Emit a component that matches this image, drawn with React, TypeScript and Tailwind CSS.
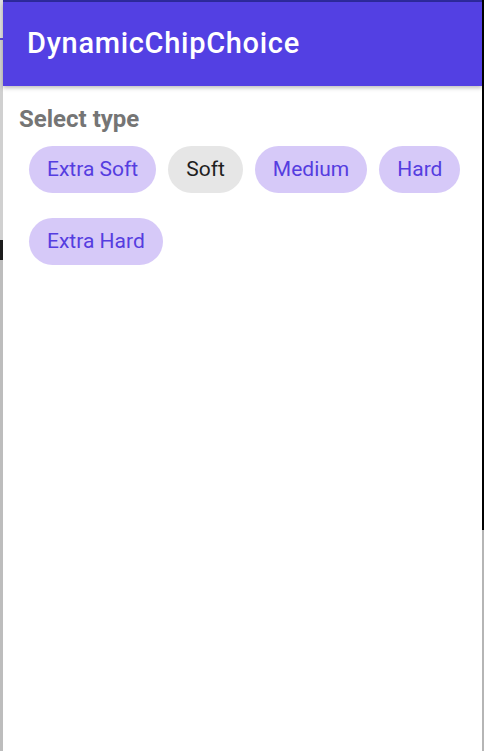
const chips = [
  { label: 'Extra Soft', selected: true },
  { label: 'Soft', selected: false },
  { label: 'Medium', selected: true },
  { label: 'Hard', selected: true },
  { label: 'Extra Hard', selected: true },
]

function Chip({ label, selected }: { label: string; selected: boolean }) {
  return (
    <div
      className={
        selected
          ? 'flex h-[47px] items-center rounded-full bg-[#d6c9f8] px-[18px] text-[21px] text-[#553de0]'
          : 'flex h-[47px] items-center rounded-full bg-[#e6e6e6] px-[18px] text-[21px] text-[#1f1f1f]'
      }
    >
      {label}
    </div>
  )
}

export default function App() {
  return (
    <div className="flex h-[751px] w-[484px] overflow-hidden bg-white" style={{ fontFamily: 'Roboto, "Noto Sans", sans-serif' }}>
      {/* left edge of the host window */}
      <div className="flex w-[3px] flex-col bg-[#d4d4d4]">
        <div className="h-[38px] bg-[#dedede]" />
        <div className="h-[2px] bg-[#5a48d8]" />
        <div className="h-[200px] bg-[#d0d0d0]" />
        <div className="h-[20px] bg-[#1c1c1c]" />
        <div className="flex-1 bg-[#bdbdbd]" />
      </div>

      <div className="flex flex-1 flex-col">
        <div className="h-[2px] bg-[#2e2a9e]" />
        <header className="relative z-10 flex h-[84px] items-center bg-[#5340e3] pl-[24px] shadow-[0_2px_4px_rgba(0,0,0,0.25)]">
          <h1 className="text-[29px] font-medium tracking-[0.7px] text-white">DynamicChipChoice</h1>
        </header>
        <main className="flex-1 bg-white pt-[19px]">
          <p className="pl-[16px] text-[24px] font-bold leading-[28px] text-[#757575]">Select type</p>
          <div className="mt-[13px] flex flex-wrap gap-x-[12px] gap-y-[25px] pl-[26px] pr-[10px]">
            {chips.map((chip) => (
              <Chip key={chip.label} label={chip.label} selected={chip.selected} />
            ))}
          </div>
        </main>
      </div>

      {/* right edge */}
      <div className="flex w-[2px] flex-col">
        <div className="h-[530px] bg-black" />
        <div className="flex-1 bg-[#b5b5b5]" />
      </div>
    </div>
  )
}
